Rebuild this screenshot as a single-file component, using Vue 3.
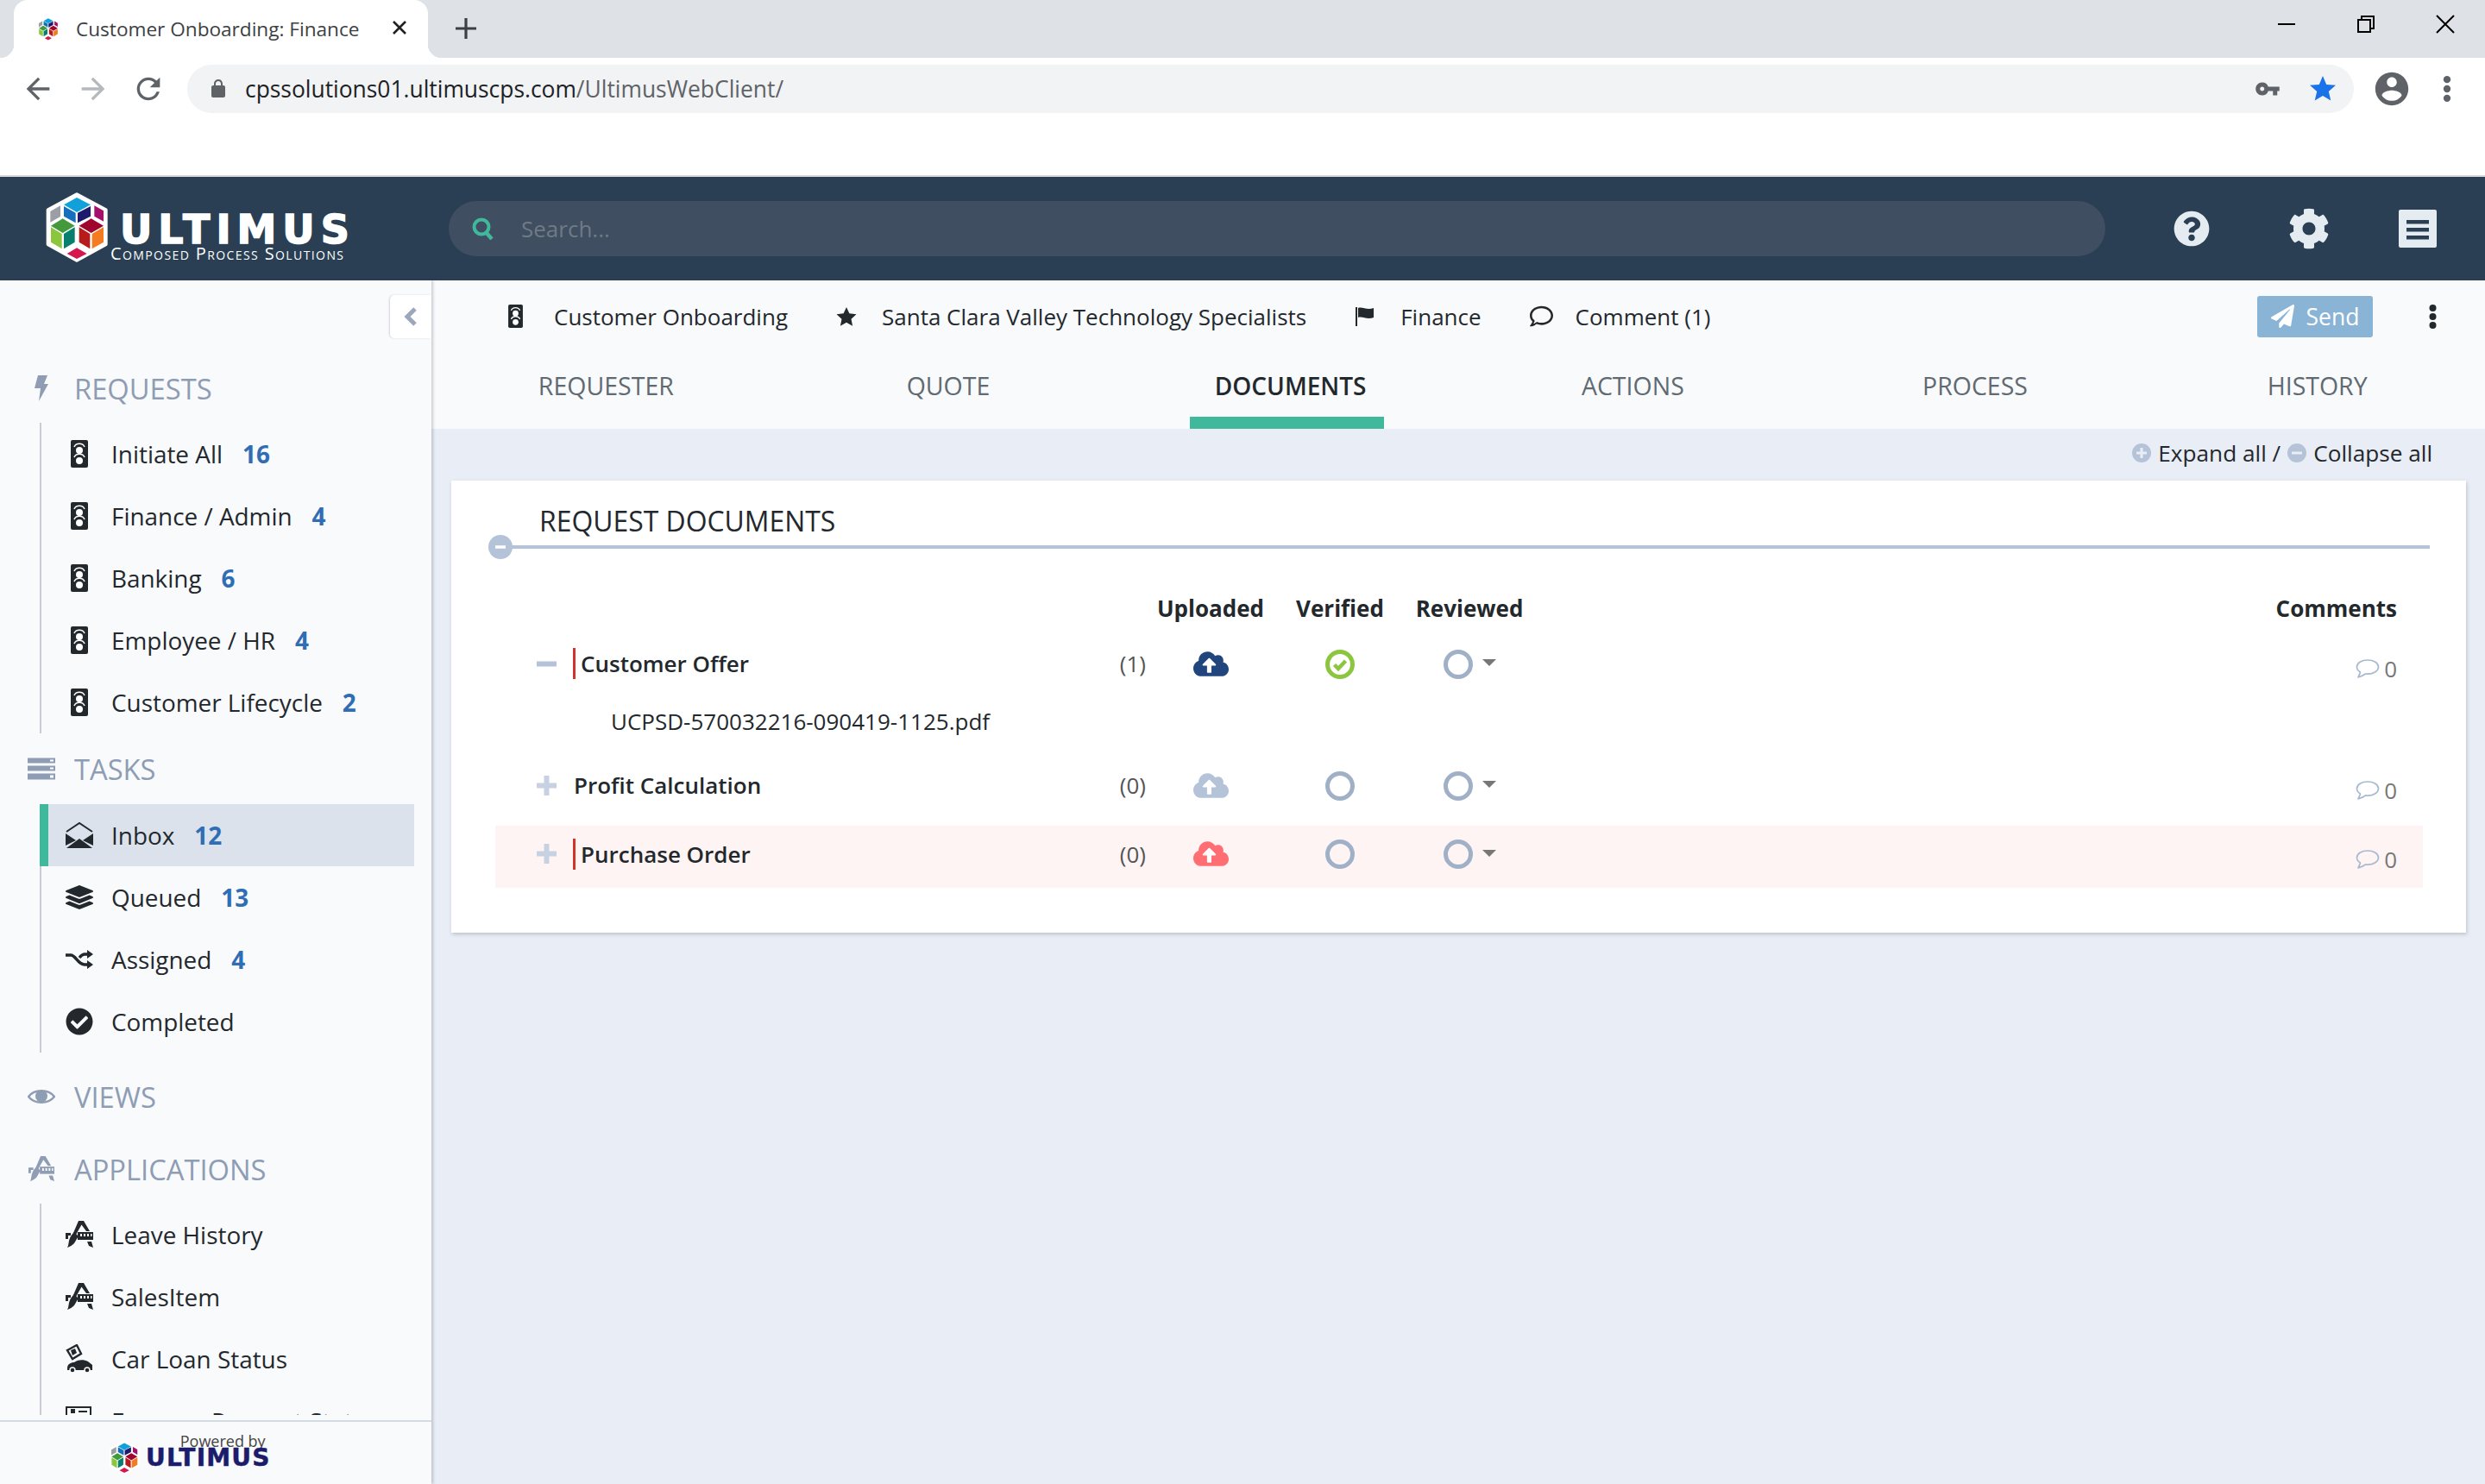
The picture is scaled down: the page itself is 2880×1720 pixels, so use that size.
<script setup>
const requests = [
  { label: 'Initiate All', count: 16 },
  { label: 'Finance / Admin', count: 4 },
  { label: 'Banking', count: 6 },
  { label: 'Employee / HR', count: 4 },
  { label: 'Customer Lifecycle', count: 2 }
]

const tasks = [
  { label: 'Inbox', count: 12, icon: 'i-inbox', active: true },
  { label: 'Queued', count: 13, icon: 'i-layers' },
  { label: 'Assigned', count: 4, icon: 'i-shuffle' },
  { label: 'Completed', icon: 'i-done' }
]

const apps = [
  { label: 'Leave History', icon: 'i-app' },
  { label: 'SalesItem', icon: 'i-app' },
  { label: 'Car Loan Status', icon: 'i-car' },
  { label: 'Expense Request Status', icon: 'i-bill' }
]

const tabs = ['REQUESTER', 'QUOTE', 'DOCUMENTS', 'ACTIONS', 'PROCESS', 'HISTORY']

const docs = [
  { name: 'Customer Offer', required: true, count: 1, state: 'done', verified: true, open: true, file: 'UCPSD-570032216-090419-1125.pdf' },
  { name: 'Profit Calculation', count: 0, state: 'empty' },
  { name: 'Purchase Order', required: true, count: 0, state: 'missing', alert: true }
]
</script>

<template>
  <div class="page">
    <svg class="sprite">
      <defs>
        <symbol id="i-logo" viewBox="0 0 270 270">
          <path d="M117 16 218 70V190L117 245 17 190V70Z" fill="#fff" stroke="#fff" stroke-width="12" stroke-linejoin="round" />
          <path d="M117 27 165 52 117 78 72 52Z" fill="#12a0db" />
          <path d="M72 57 113 80V115L72 92Z" fill="#1470bd" />
          <path d="M120 80 165 57V92L120 115Z" fill="#1d1a6b" />
          <path d="M25 75 60 55V93L25 113Z" fill="#9b9ea3" />
          <path d="M178 55 210 73V110L178 92Z" fill="#a5106a" />
          <path d="M68 100 110 125 68 150 27 125Z" fill="#43993b" />
          <path d="M27 130 65 153V205L27 182Z" fill="#8cc63f" />
          <path d="M72 153 110 130V182L72 205Z" fill="#067f6f" />
          <path d="M167 100 210 125 167 150 125 125Z" fill="#a0052d" />
          <path d="M125 130 163 153V205L125 182Z" fill="#b71c1c" />
          <path d="M170 153 210 130V182L170 205Z" fill="#f47b20" />
          <path d="M117 202 152 222 117 240 83 222Z" fill="#d4174f" />
        </symbol>
        <symbol id="i-light" viewBox="0 0 20 32">
          <rect width="20" height="32" rx="2" fill="currentColor" />
          <circle cx="10" cy="12" r="4" fill="#fff" />
          <circle cx="10" cy="24" r="4" fill="#fff" />
          <path d="M4 8C6 3 14 3 16 8M4 20C6 15 14 15 16 20" fill="none" stroke="#fff" stroke-width="1.6" />
        </symbol>
        <symbol id="i-bolt" viewBox="0 0 16 30">
          <path d="M4 0H15L11 10H16L5 30 7 15H0Z" fill="currentColor" />
        </symbol>
        <symbol id="i-server" viewBox="0 0 32 25">
          <path d="M0 0H32V6H0ZM0 9H32V15H0ZM0 18H32V25H0Z" fill="currentColor" />
          <path d="M26 2H30V4H26ZM26 11H30V13H26ZM26 20H30V23H26Z" fill="#fff" />
        </symbol>
        <symbol id="i-inbox" viewBox="0 0 32 30">
          <path d="M1 11 16 1 31 11" fill="none" stroke="currentColor" stroke-width="2" />
          <path d="M0 13 12 21 0 27ZM32 13 20 21 32 27ZM1 30 16 19 31 30Z" fill="currentColor" />
        </symbol>
        <symbol id="i-layers" viewBox="0 0 512 512" preserveAspectRatio="none">
          <path d="M12.41 148.02l232.94 105.67c6.8 3.09 14.49 3.09 21.29 0l232.94-105.67c16.55-7.51 16.55-32.52 0-40.03L266.65 2.31a25.607 25.607 0 0 0-21.29 0L12.41 107.98c-16.55 7.51-16.55 32.53 0 40.04zm487.18 88.28l-58.09-26.33-161.64 73.27c-7.56 3.43-15.59 5.17-23.86 5.17s-16.29-1.74-23.86-5.17L70.51 209.97l-58.1 26.33c-16.55 7.5-16.55 32.5 0 40l232.94 105.59c6.8 3.08 14.49 3.08 21.29 0L499.59 276.3c16.55-7.5 16.55-32.5 0-40zm0 127.8l-57.87-26.23-161.86 73.37c-7.56 3.43-15.59 5.17-23.86 5.17s-16.29-1.74-23.86-5.17L70.29 337.87 12.41 364.1c-16.55 7.5-16.55 32.5 0 40l232.94 105.59c6.8 3.08 14.49 3.08 21.29 0L499.59 404.1c16.55-7.5 16.55-32.5 0-40z" fill="currentColor" />
        </symbol>
        <symbol id="i-shuffle" viewBox="0 0 32 24">
          <path d="M0 7H6C12 7 14 18 22 18H26M16 10C18 7.500 20 6 22 6H26" fill="none" stroke="currentColor" stroke-width="3.400" />
          <path d="M25 1 32 6 25 11ZM25 13 32 18 25 23Z" fill="currentColor" />
        </symbol>
        <symbol id="i-done" viewBox="0 0 512 512">
          <path d="M504 256c0 136.967-111.033 248-248 248S8 392.967 8 256 119.033 8 256 8s248 111.033 248 248zM227.314 387.314l184-184c6.248-6.248 6.248-16.379 0-22.627l-22.627-22.627c-6.248-6.249-16.379-6.249-22.628 0L216 308.118l-70.059-70.059c-6.248-6.248-16.379-6.248-22.628 0l-22.627 22.627c-6.248 6.248-6.248 16.379 0 22.627l104 104c6.249 6.25 16.379 6.25 22.628.001z" fill="currentColor" />
        </symbol>
        <symbol id="i-eye" viewBox="0 0 32 20">
          <path d="M1 10C8 1 24 1 31 10 24 19 8 19 1 10Z" fill="none" stroke="currentColor" stroke-width="2.4" />
          <circle cx="16" cy="9.5" r="7" fill="currentColor" />
        </symbol>
        <symbol id="i-app" viewBox="0 0 32 32">
          <path d="M15 0H21L28 12H24L18.500 4.500 12 16 9 14Z" fill="currentColor" />
          <path d="M14 13H32V22H14Z" fill="currentColor" />
          <path d="M17 15H19V18H17ZM21 15H23V18H21ZM25 15H27V18H25ZM29 15H30.500V18H29Z" fill="#fff" />
          <path d="M10 13 15 18C13 20 12 23 10 26 8 28 5 30 2 31 4 28 3 24 5 20 6 17 8 15 10 13Z" fill="currentColor" />
          <path d="M0 14H6V17H3V21H0ZM25 24 30 24 32 31 27 29Z" fill="currentColor" />
        </symbol>
        <symbol id="i-car" viewBox="0 0 32 34">
          <path d="M2 7 13 1 18 11 8 17Z" fill="none" stroke="currentColor" stroke-width="2.400" />
          <path d="M6 7 11 5 13 10 8 13Z" fill="currentColor" />
          <path d="M2 28C2 23 6 21 10 21 13 18 21 17 26 20L31 24V30H2Z" fill="currentColor" />
          <circle cx="8" cy="30" r="3" fill="currentColor" stroke="#f9fafc" stroke-width="1.4" />
          <circle cx="25" cy="30" r="3" fill="currentColor" stroke="#f9fafc" stroke-width="1.4" />
        </symbol>
        <symbol id="i-bill" viewBox="0 0 32 34">
          <rect x="1" y="1" width="28" height="26" fill="none" stroke="currentColor" stroke-width="2" />
          <path d="M6 3H11V8H6ZM15 5H25V7H15Z" fill="currentColor" />
        </symbol>
        <symbol id="i-cloud" viewBox="0 0 640 512">
          <path d="M240 160H400V420H240Z" fill="#fff" />
          <path d="M537.6 226.6c4.1-10.7 6.4-22.4 6.4-34.6 0-53-43-96-96-96-19.7 0-38.1 6-53.3 16.2C367 64.2 315.3 32 256 32c-88.4 0-160 71.6-160 160 0 2.7.1 5.4.2 8.1C40.2 219.8 0 273.2 0 336c0 79.5 64.5 144 144 144h368c70.7 0 128-57.3 128-128 0-61.9-44-113.6-102.4-125.4zM393.4 288H328v112c0 8.8-7.2 16-16 16h-48c-8.8 0-16-7.2-16-16V288h-65.4c-14.3 0-21.4-17.2-11.3-27.3l105.4-105.4c6.2-6.2 16.4-6.2 22.6 0l105.4 105.4c10.1 10.1 2.9 27.3-11.3 27.3z" fill="currentColor" />
        </symbol>
        <symbol id="i-bubble" viewBox="0 0 28 24">
          <path d="M14 2C7 2 1.500 5.500 1.500 10C1.500 12.500 3 14.500 5.500 16C5 18 4 20 3 22 6.500 21 9.500 19.500 11.500 18C12.300 18.100 13.200 18.200 14 18.200 21 18.200 26.500 14.500 26.500 10 26.500 5.500 21 2 14 2Z" fill="none" stroke="#a9b9d0" stroke-width="1.700" stroke-linejoin="round" />
        </symbol>
      </defs>
    </svg>

    <div class="tabstrip">
      <div class="browser-tab">
        <svg class="favicon"><use href="#i-logo" /></svg>
        <span class="browser-tab-title">Customer Onboarding: Finance</span>
        <svg class="tab-close" viewBox="0 0 18 18"><path d="M2 2 16 16M16 2 2 16" stroke="#202124" stroke-width="2.600" /></svg>
      </div>
      <svg class="new-tab" viewBox="0 0 26 26"><path d="M13 1V25M1 13H25" stroke="#3c4043" stroke-width="3.200" /></svg>
      <div class="winctl">
        <div class="winbtn"><svg viewBox="0 0 22 22"><path d="M1 11H21" stroke="#000" stroke-width="2" /></svg></div>
        <div class="winbtn"><svg viewBox="0 0 22 22"><path d="M2 6H16V20H2ZM6 6V2H20V16H16" fill="none" stroke="#000" stroke-width="2" /></svg></div>
        <div class="winbtn"><svg viewBox="0 0 22 22"><path d="M1 1 21 21M21 1 1 21" stroke="#000" stroke-width="2" /></svg></div>
      </div>
    </div>

    <div class="toolbar">
      <div class="navbtn"><svg viewBox="0 0 24 24"><path d="M20 11H7.830l5.590-5.590L12 4l-8 8 8 8 1.410-1.410L7.830 13H20v-2z" fill="#5f6368" /></svg></div>
      <div class="navbtn"><svg viewBox="0 0 24 24"><path d="M4 11h12.170l-5.590-5.590L12 4l8 8-8 8-1.410-1.410L16.170 13H4v-2z" fill="#b5b8bc" /></svg></div>
      <div class="navbtn"><svg viewBox="0 0 24 24"><path d="M17.650 6.350A7.958 7.958 0 0012 4c-4.420 0-7.990 3.580-7.990 8s3.570 8 7.990 8c3.730 0 6.840-2.550 7.730-6h-2.080A5.990 5.990 0 0112 18c-3.310 0-6-2.690-6-6s2.690-6 6-6c1.660 0 3.140.69 4.220 1.780L13 11h7V4l-2.350 2.350z" fill="#5f6368" /></svg></div>
      <div class="address">
        <svg class="lock" viewBox="0 0 24 24"><path d="M18 8h-1V6c0-2.760-2.240-5-5-5S7 3.240 7 6v2H6c-1.100 0-2 .9-2 2v10c0 1.100.9 2 2 2h12c1.100 0 2-.9 2-2V10c0-1.100-.9-2-2-2zM9 6c0-1.660 1.340-3 3-3s3 1.340 3 3v2H9V6z" fill="#5f6368" /></svg>
        <span class="url">cpssolutions01.ultimuscps.com<span class="url-path">/UltimusWebClient/</span></span>
        <svg class="key" viewBox="0 0 24 24"><path d="M12.650 10A5.990 5.990 0 007 6c-3.310 0-6 2.690-6 6s2.690 6 6 6a5.990 5.990 0 005.650-4H17v4h4v-4h2v-4H12.650zM7 14c-1.100 0-2-.9-2-2s.9-2 2-2 2 .9 2 2-.9 2-2 2z" fill="#5f6368" /></svg>
        <svg class="bookmark" viewBox="0 0 24 24"><path d="M12 17.270 18.180 21l-1.640-7.030L22 9.240l-7.190-.61L12 2 9.190 8.630 2 9.240l5.460 4.730L5.820 21z" fill="#1a73e8" /></svg>
      </div>
      <div class="navbtn avatar"><svg viewBox="0 0 24 24"><path d="M12 2C6.480 2 2 6.480 2 12s4.480 10 10 10 10-4.480 10-10S17.520 2 12 2zm0 3c1.660 0 3 1.340 3 3s-1.340 3-3 3-3-1.340-3-3 1.340-3 3-3zm0 14.200c-2.500 0-4.710-1.280-6-3.220.03-1.990 4-3.080 6-3.080 1.990 0 5.970 1.090 6 3.080-1.290 1.940-3.500 3.220-6 3.220z" fill="#5f6368" /></svg></div>
      <div class="navbtn"><svg viewBox="0 0 24 24"><circle cx="12" cy="5.500" r="2.500" fill="#5f6368" /><circle cx="12" cy="12" r="2.500" fill="#5f6368" /><circle cx="12" cy="18.500" r="2.500" fill="#5f6368" /></svg></div>
    </div>

    <header class="topbar">
      <div class="brand">
        <svg class="brand-logo" viewBox="0 0 234 270"><use href="#i-logo" width="270" height="270" /></svg>
        <div class="brand-text">
          <div class="brand-name">ULTIMUS</div>
          <div class="brand-sub">Composed Process Solutions</div>
        </div>
      </div>
      <div class="search">
        <svg class="search-icon" viewBox="0 0 26 26"><circle cx="11" cy="11" r="8.500" fill="none" stroke="#40b89c" stroke-width="4" /><path d="M16 17 23 25" stroke="#40b89c" stroke-width="4.500" /></svg>
        <span class="search-text">Search...</span>
      </div>
      <svg class="help" viewBox="0 0 512 512"><path d="M504 256c0 136.997-111.043 248-248 248S8 392.997 8 256C8 119.083 119.043 8 256 8s248 111.083 248 248zM262.655 90c-54.497 0-89.255 22.957-116.549 63.758-3.536 5.286-2.353 12.415 2.715 16.258l34.699 26.310c5.205 3.947 12.621 3.008 16.665-2.122 17.864-22.658 30.113-35.797 57.303-35.797 20.429 0 45.698 13.148 45.698 32.958 0 14.976-12.363 22.667-32.534 33.976C247.128 238.528 216 254.941 216 296v4c0 6.627 5.373 12 12 12h56c6.627 0 12-5.373 12-12v-1.333c0-28.462 83.186-29.647 83.186-106.667 0-58.002-60.165-102-116.531-102zM256 338c-25.365 0-46 20.635-46 46 0 25.364 20.635 46 46 46s46-20.636 46-46c0-25.365-20.635-46-46-46z" fill="#e4ebf1" /></svg>
      <svg class="gear" viewBox="0 0 512 512"><path d="M487.400 315.700l-42.600-24.600c4.300-23.200 4.300-47 0-70.200l42.600-24.600c4.900-2.800 7.100-8.600 5.500-14-11.100-35.600-30-67.800-54.700-94.600-3.800-4.100-10-5.100-14.800-2.300L380.800 110c-17.900-15.400-38.500-27.300-60.800-35.100V25.800c0-5.600-3.900-10.500-9.400-11.700-36.700-8.200-74.300-7.800-109.200 0-5.500 1.200-9.400 6.100-9.400 11.700V75c-22.200 7.900-42.800 19.800-60.800 35.100L88.700 85.500c-4.900-2.800-11-1.900-14.800 2.300-24.700 26.700-43.600 58.900-54.700 94.600-1.700 5.400.6 11.200 5.500 14L67.300 221c-4.300 23.200-4.300 47 0 70.200l-42.600 24.600c-4.900 2.800-7.100 8.600-5.500 14 11.100 35.600 30 67.800 54.700 94.600 3.800 4.100 10 5.100 14.800 2.300l42.600-24.600c17.900 15.400 38.500 27.300 60.800 35.100v49.200c0 5.600 3.900 10.500 9.400 11.700 36.700 8.200 74.300 7.800 109.200 0 5.500-1.200 9.400-6.100 9.400-11.700v-49.200c22.200-7.900 42.800-19.800 60.800-35.100l42.600 24.600c4.900 2.800 11 1.900 14.800-2.300 24.700-26.700 43.600-58.900 54.700-94.600 1.500-5.500-.7-11.300-5.600-14.100zM256 336c-44.100 0-80-35.900-80-80s35.900-80 80-80 80 35.900 80 80-35.900 80-80 80z" fill="#e4ebf1" /></svg>
      <svg class="menu" viewBox="0 0 44 44"><rect width="44" height="44" rx="2" fill="#e4ebf1" /><path d="M9 12H35V16.500H9ZM9 21H35V25.500H9ZM9 30H35V34.500H9Z" fill="#2a3f54" /></svg>
    </header>

    <div class="body">
      <aside class="sidebar">
        <button class="collapse">
          <svg viewBox="0 0 18 24"><path d="M14 3 5 12 14 21" fill="none" stroke="#9ba7bd" stroke-width="5" /></svg>
        </button>
        <nav class="nav">
          <div class="nav-head first">
            <svg class="head-icon bolt"><use href="#i-bolt" /></svg>
            <span>REQUESTS</span>
          </div>
          <ul class="nav-list">
            <li v-for="r in requests" :key="r.label" class="nav-item">
              <span class="item-icon"><svg class="light"><use href="#i-light" /></svg></span>
              <span>{{ r.label }}</span>
              <b class="count">{{ r.count }}</b>
            </li>
          </ul>

          <div class="nav-head tasks">
            <svg class="head-icon"><use href="#i-server" /></svg>
            <span>TASKS</span>
          </div>
          <ul class="nav-list">
            <li v-for="t in tasks" :key="t.label" class="nav-item" :class="{ active: t.active }">
              <span class="item-icon"><svg class="task-icon" :class="t.icon"><use :href="'#' + t.icon" /></svg></span>
              <span>{{ t.label }}</span>
              <b v-if="t.count" class="count">{{ t.count }}</b>
            </li>
          </ul>

          <div class="nav-head views">
            <svg class="head-icon"><use href="#i-eye" /></svg>
            <span>VIEWS</span>
          </div>
          <div class="nav-head applications">
            <svg class="head-icon"><use href="#i-app" /></svg>
            <span>APPLICATIONS</span>
          </div>
          <ul class="nav-list">
            <li v-for="a in apps" :key="a.label" class="nav-item">
              <span class="item-icon"><svg class="task-icon"><use :href="'#' + a.icon" /></svg></span>
              <span>{{ a.label }}</span>
            </li>
          </ul>
        </nav>
        <div class="powered">
          <svg class="powered-logo"><use href="#i-logo" /></svg>
          <div class="powered-text">
            <span class="powered-by">Powered by</span>
            <span class="powered-name">ULTIMUS</span>
          </div>
        </div>
      </aside>

      <main class="main">
        <div class="main-top">
          <div class="crumbs">
            <div class="crumb">
              <span class="crumb-icon"><svg class="crumb-light"><use href="#i-light" /></svg></span>
              <span>Customer Onboarding</span>
            </div>
            <div class="crumb">
              <span class="crumb-icon">
                <svg class="crumb-star" viewBox="0 0 24 24"><path d="M12 1 15.400 8.300 23.500 9.300 17.500 14.800 19.100 22.800 12 18.800 4.900 22.800 6.500 14.800.5 9.300 8.600 8.300Z" fill="#23282d" /></svg>
              </span>
              <span>Santa Clara Valley Technology Specialists</span>
            </div>
            <div class="crumb">
              <span class="crumb-icon">
                <svg class="crumb-flag" viewBox="0 0 23 24"><path d="M1 1H3V23H1ZM4 2C9 0 14 5 22 2V13C14 16 9 11 4 13Z" fill="#23282d" /></svg>
              </span>
              <span>Finance</span>
            </div>
            <div class="crumb">
              <span class="crumb-icon">
                <svg class="crumb-comment" viewBox="0 0 512 512"><path d="M256 32C114.600 32 0 125.100 0 240c0 49.600 21.400 95 57 130.700C44.500 421.100 2.700 466 2.200 466.500c-2.200 2.300-2.800 5.700-1.500 8.700S4.800 480 8 480c66.300 0 116-31.800 140.600-51.400 32.700 12.300 69 19.400 107.400 19.400 141.400 0 256-93.100 256-208S397.400 32 256 32zm0 368c-26.700 0-53.100-4.100-78.400-12.100l-22.700-7.200-19.500 13.800c-14.300 10.100-33.900 21.400-57.500 29 7.300-12.100 14.400-25.700 19.900-40.200l10.600-28.100-20.600-21.800C69.700 314.100 48 282.200 48 240c0-88.200 93.300-160 208-160s208 71.800 208 160-93.300 160-208 160z" fill="#23282d" /></svg>
              </span>
              <span>Comment (1)</span>
            </div>
            <button class="send">
              <svg class="send-icon" viewBox="0 0 512 512"><path d="M476 3.200 12.500 270.600c-18.100 10.400-15.800 35.600 2.200 43.200L121 358.400l287.300-253.200c5.500-4.900 13.300 2.600 8.600 8.300L176 407v80.500c0 23.600 28.500 32.900 42.500 15.800L282 426l124.600 52.200c14.200 6 30.400-2.900 33-18.200l72-432C515 7.800 493.300-6.800 476 3.200z" fill="#fff" /></svg>
              Send
            </button>
            <svg class="more" viewBox="0 0 9 28"><circle cx="4.500" cy="4" r="4" fill="#23282d" /><circle cx="4.500" cy="14" r="4" fill="#23282d" /><circle cx="4.500" cy="24" r="4" fill="#23282d" /></svg>
          </div>
          <div class="tabs">
            <div v-for="t in tabs" :key="t" class="tab">
              <span class="tab-label" :class="{ current: t === 'DOCUMENTS' }">{{ t }}</span>
            </div>
          </div>
        </div>

        <div class="expand-row">
          <svg class="round" viewBox="0 0 22 22"><circle cx="11" cy="11" r="11" fill="#b5c3d9" /><path d="M5 11H17M11 5V17" stroke="#e9edf5" stroke-width="3" /></svg>
          <span>Expand all /</span>
          <svg class="round" viewBox="0 0 22 22"><circle cx="11" cy="11" r="11" fill="#b5c3d9" /><path d="M5 11H17" stroke="#e9edf5" stroke-width="3" /></svg>
          <span>Collapse all</span>
        </div>

        <section class="card">
          <div class="card-title">
            REQUEST DOCUMENTS
            <svg class="card-toggle" viewBox="0 0 28 28"><circle cx="14" cy="14" r="14" fill="#b5c3d9" /><path d="M8 14H20" stroke="#fff" stroke-width="3.500" /></svg>
          </div>

          <div class="doc-grid doc-head">
            <span></span>
            <span></span>
            <span></span>
            <b>Uploaded</b>
            <b>Verified</b>
            <b>Reviewed</b>
            <b class="right">Comments</b>
          </div>

          <template v-for="d in docs" :key="d.name">
            <div class="doc-grid doc-row" :class="{ alert: d.alert }">
              <svg class="toggle" viewBox="0 0 23 23">
                <path v-if="d.open" d="M0 8.500H23V14.500H0Z" fill="#b5c3d9" />
                <path v-else d="M0 8.500H23V14.500H0ZM8.500 0H14.500V23H8.500Z" fill="#c6d1e1" />
              </svg>
              <span class="doc-name" :class="{ required: d.required }">{{ d.name }}</span>
              <span class="doc-count">({{ d.count }})</span>
              <svg class="cloud" :class="d.state"><use href="#i-cloud" /></svg>
              <span class="cell">
                <svg class="ring" viewBox="0 0 34 34">
                  <circle cx="17" cy="17" r="14.500" fill="none" :stroke="d.verified ? '#8cc63f' : '#a0b0c6'" stroke-width="5" />
                  <path v-if="d.verified" d="M10.500 17.500 15 22 23.500 13" fill="none" stroke="#8cc63f" stroke-width="4.500" />
                </svg>
              </span>
              <span class="cell">
                <svg class="ring" viewBox="0 0 34 34"><circle cx="17" cy="17" r="14.500" fill="none" stroke="#a0b0c6" stroke-width="5" /></svg>
                <i class="caret"></i>
              </span>
              <span class="doc-comments">
                <svg class="bubble"><use href="#i-bubble" /></svg>
                0
              </span>
            </div>
            <div v-if="d.file" class="doc-file">{{ d.file }}</div>
          </template>
        </section>
      </main>
    </div>
  </div>
</template>

<style>
html,
body {
  margin: 0;
  background: #fff;
}
</style>

<style scoped>
* {
  box-sizing: border-box;
}

.page {
  width: 2880px;
  height: 1720px;
  display: flex;
  flex-direction: column;
  overflow: hidden;
  font-family: "Open Sans", "Liberation Sans", sans-serif;
  color: #23282d;
}

.sprite {
  display: none;
}

/* browser chrome */
.tabstrip {
  height: 67px;
  flex: none;
  display: flex;
  align-items: center;
  background: #dee1e6;
  padding-left: 16px;
}

.browser-tab {
  position: relative;
  width: 480px;
  height: 67px;
  display: flex;
  align-items: center;
  background: #fff;
  border-radius: 16px 16px 0 0;
  padding-left: 26px;
}

.browser-tab::before,
.browser-tab::after {
  content: "";
  position: absolute;
  bottom: 0;
  width: 16px;
  height: 16px;
}

.browser-tab::before {
  left: -16px;
  background: radial-gradient(circle at 0 0, transparent 16px, #fff 16.500px);
}

.browser-tab::after {
  right: -16px;
  background: radial-gradient(circle at 100% 0, transparent 16px, #fff 16.500px);
}

.favicon {
  width: 32px;
  height: 32px;
  flex: none;
}

.browser-tab-title {
  margin-left: 14px;
  font-size: 22.600px;
  color: #3c4043;
  white-space: nowrap;
}

.tab-close {
  position: absolute;
  left: 438px;
  top: 23px;
  width: 18px;
  height: 18px;
}

.new-tab {
  width: 26px;
  height: 26px;
  margin-left: 31px;
  margin-top: -2px;
}

.winctl {
  margin-left: auto;
  display: flex;
  align-self: flex-start;
}

.winbtn {
  width: 92px;
  height: 56px;
  display: flex;
  align-items: center;
  justify-content: center;
}

.winbtn svg {
  width: 22px;
  height: 22px;
}

.toolbar {
  height: 138px;
  flex: none;
  display: flex;
  align-items: flex-start;
  padding: 8px 12px 0;
  background: #fff;
  border-bottom: 2px solid #d9d9d9;
}

.navbtn {
  width: 64px;
  height: 56px;
  display: flex;
  align-items: center;
  justify-content: center;
}

.navbtn svg {
  width: 40px;
  height: 40px;
}

.navbtn.avatar {
  margin-left: 12px;
}

.navbtn.avatar svg {
  width: 46px;
  height: 46px;
}

.address {
  flex: 1;
  height: 56px;
  margin-left: 13px;
  display: flex;
  align-items: center;
  padding: 0 18px 0 24px;
  background: #f1f3f4;
  border-radius: 28px;
}

.lock {
  width: 24px;
  height: 24px;
  margin-right: 19px;
}

.url {
  font-size: 26.400px;
  color: #202124;
  white-space: nowrap;
}

.url-path {
  color: #5f6368;
}

.key {
  width: 30px;
  height: 30px;
  margin-left: auto;
  margin-right: 31px;
}

.bookmark {
  width: 36px;
  height: 36px;
}

/* app header */
.topbar {
  height: 120px;
  flex: none;
  display: flex;
  align-items: center;
  background: #2a3f54;
  padding: 0 56px 0 50px;
}

.brand {
  width: 470px;
  flex: none;
  display: flex;
  align-items: center;
}

.brand-logo {
  width: 78px;
  height: 90px;
  flex: none;
}

.brand-text {
  margin-top: 22px;
}

.brand-name {
  padding-left: 11px;
  font-family: "DejaVu Sans", sans-serif;
  font-weight: 700;
  font-size: 46px;
  line-height: 35px;
  letter-spacing: 7px;
  color: #fff;
  -webkit-text-stroke: 1.5px #fff;
}

.brand-sub {
  font-size: 20px;
  line-height: 20px;
  letter-spacing: 1.400px;
  font-variant: small-caps;
  color: #fff;
  white-space: nowrap;
}

.search {
  flex: 1;
  height: 64px;
  display: flex;
  align-items: center;
  padding-left: 27px;
  background: #3f4e60;
  border-radius: 32px;
}

.search-icon {
  width: 26px;
  height: 26px;
  margin-right: 31px;
}

.search-text {
  font-size: 26px;
  color: #6f7a85;
}

.help {
  width: 42px;
  height: 42px;
  margin-left: 79px;
}

.gear {
  width: 48px;
  height: 48px;
  margin-left: 91px;
}

.menu {
  width: 44px;
  height: 44px;
  margin-left: 80px;
}

.body {
  flex: 1;
  min-height: 0;
  display: flex;
}

/* sidebar */
.sidebar {
  position: relative;
  z-index: 1;
  width: 500px;
  flex: none;
  display: flex;
  flex-direction: column;
  background: #f9fafc;
  box-shadow: 2px 0 3px rgba(60, 70, 90, 0.25);
}

.collapse {
  position: absolute;
  top: 17px;
  right: 0;
  width: 48px;
  height: 50px;
  padding: 0;
  border: none;
  border-radius: 5px 0 0 5px;
  background: #fff;
  box-shadow: -1px 0 2px rgba(60, 70, 90, 0.2);
  display: flex;
  align-items: center;
  justify-content: center;
}

.collapse svg {
  width: 18px;
  height: 24px;
}

.nav {
  height: 1315px;
  flex: none;
  overflow: hidden;
  padding: 103px 20px 0 46px;
}

.nav-head {
  height: 44px;
  margin-left: -14px;
  margin-bottom: 20px;
  display: flex;
  align-items: center;
  font-size: 32.700px;
  color: #8e9db4;
}

.nav-head.first {
  margin-bottom: 18px;
}

.nav-head.tasks {
  margin-top: 19px;
  margin-bottom: 19px;
}

.nav-head.views {
  margin-top: 29px;
  margin-bottom: 40px;
}

.nav-head.applications {
  margin-bottom: 18px;
}

.head-icon {
  width: 32px;
  height: 30px;
  margin-right: 22px;
  flex: none;
}

.nav-list {
  list-style: none;
  margin: 0;
  padding: 0;
  border-left: 2px solid #c9cdd3;
}

.nav-item {
  height: 72px;
  display: flex;
  align-items: center;
  padding-left: 24px;
  font-size: 27.900px;
  white-space: nowrap;
}

.nav-item.active {
  margin-left: -2px;
  padding-left: 16px;
  border-left: 10px solid #40b89c;
  background: #dbe2ec;
}

.item-icon {
  width: 40px;
  height: 36px;
  margin-right: 17px;
  flex: none;
  display: flex;
  align-items: center;
  justify-content: center;
}

.light {
  width: 20px;
  height: 32px;
}

.task-icon {
  width: 32px;
  height: 34px;
}

.task-icon.i-layers {
  height: 28px;
}

.count {
  margin-left: 23px;
  color: #2f6db5;
  font-weight: 700;
}

.powered {
  height: 74px;
  flex: none;
  margin-top: 6px;
  display: flex;
  padding-left: 125px;
  border-top: 2px solid #d5dbe3;
}

.powered-logo {
  width: 44px;
  height: 44px;
  margin-top: 20px;
  flex: none;
}

.powered-text {
  padding-top: 13px;
  display: flex;
  flex-direction: column;
  align-items: flex-end;
}

.powered-by {
  margin-right: 6px;
  font-size: 18px;
  line-height: 18px;
  color: #444;
}

.powered-name {
  font-family: "DejaVu Sans", sans-serif;
  font-weight: 700;
  font-size: 28px;
  line-height: 22px;
  letter-spacing: 1.200px;
  color: #1b1c6b;
  -webkit-text-stroke: 0.5px #1b1c6b;
}

/* main content */
.main {
  flex: 1;
  min-width: 0;
  background: #e9edf5;
}

.main-top {
  height: 172px;
  background: #f9fafc;
}

.crumbs {
  height: 83px;
  display: flex;
  align-items: center;
  gap: 56px;
  padding: 0 56px 0 89px;
  font-size: 26px;
  white-space: nowrap;
}

.crumb {
  display: flex;
  align-items: center;
}

.crumb-icon {
  width: 53px;
  height: 30px;
  flex: none;
  display: flex;
  align-items: center;
}

.crumb-light {
  width: 17px;
  height: 27px;
}

.crumb-star {
  width: 24px;
  height: 24px;
}

.crumb-flag {
  width: 23px;
  height: 24px;
}

.crumb-comment {
  width: 27px;
  height: 27px;
}

.send {
  width: 134px;
  height: 48px;
  margin-left: auto;
  padding: 0;
  border: none;
  border-radius: 3px;
  background: #8ab4d6;
  color: #fff;
  font-family: inherit;
  font-size: 26.500px;
  display: flex;
  align-items: center;
  justify-content: center;
  gap: 14px;
}

.send-icon {
  width: 27px;
  height: 27px;
}

.more {
  width: 9px;
  height: 28px;
  margin-left: 9px;
}

.tabs {
  height: 89px;
  display: grid;
  grid-template-columns: repeat(6, 1fr);
}

.tab {
  text-align: center;
  font-size: 28.500px;
  color: #5f6a72;
}

.tab-label {
  display: inline-block;
  height: 89px;
  padding: 20px 21px 0 29px;
  line-height: 38px;
}

.tab-label.current {
  color: #23282d;
  font-size: 28px;
  font-weight: 600;
  border-bottom: 14px solid #40b89c;
}

.expand-row {
  height: 60px;
  display: flex;
  align-items: center;
  justify-content: flex-end;
  gap: 8px;
  padding: 0 61px 4px 0;
  font-size: 26.200px;
}

.round {
  width: 22px;
  height: 22px;
}

.card {
  margin: 0 22px 0 23px;
  padding: 0 50px 52px 51px;
  background: #fff;
  box-shadow: 1px 2px 4px rgba(60, 70, 90, 0.25);
}

.card-title {
  position: relative;
  height: 79px;
  margin-right: -8px;
  margin-left: 6px;
  padding: 27px 0 0 45px;
  border-bottom: 4px solid #b5c3d9;
  font-size: 31.900px;
  line-height: 40px;
  color: #23282d;
}

.card-toggle {
  position: absolute;
  left: -14px;
  bottom: -16px;
  width: 28px;
  height: 28px;
}

.doc-grid {
  display: grid;
  grid-template-columns: 43px 585px 78px 150px 150px 150px 1fr;
  align-items: center;
  padding: 0 30px 0 48px;
  font-size: 26px;
}

.doc-head {
  height: 57px;
  margin-top: 40px;
}

.doc-head b {
  text-align: center;
  font-weight: 700;
  font-size: 26px;
}

.doc-head b.right {
  text-align: right;
}

.doc-row {
  height: 72px;
}

.doc-file + .doc-row {
  margin-top: 7px;
}

.doc-row.alert {
  margin-top: 11px;
  padding-bottom: 7px;
  background: #fff4f4;
}

.toggle {
  width: 23px;
  height: 23px;
}

.doc-name {
  font-weight: 600;
  white-space: nowrap;
}

.doc-name.required {
  margin-left: -1px;
  padding-left: 6px;
  border-left: 3px solid #d0342c;
}

.doc-count {
  text-align: right;
  color: #555;
}

.cloud {
  width: 41px;
  height: 33px;
  justify-self: center;
  color: #b5c3d9;
}

.cloud.done {
  color: #21467e;
}

.cloud.missing {
  color: #ff6e72;
}

.cell {
  display: flex;
  align-items: center;
  justify-content: center;
  padding-top: 1px;
}

.ring {
  width: 34px;
  height: 34px;
}

.caret {
  margin-left: 11px;
  margin-top: -3px;
  border: 8px solid transparent;
  border-top-color: #777;
  border-bottom: none;
}

.doc-comments {
  display: flex;
  align-items: center;
  justify-content: flex-end;
  gap: 5px;
  padding-top: 12px;
  color: #777;
}

.bubble {
  width: 28px;
  height: 24px;
}

.doc-file {
  height: 62px;
  padding-left: 134px;
  display: flex;
  align-items: center;
  font-size: 26px;
}
</style>
